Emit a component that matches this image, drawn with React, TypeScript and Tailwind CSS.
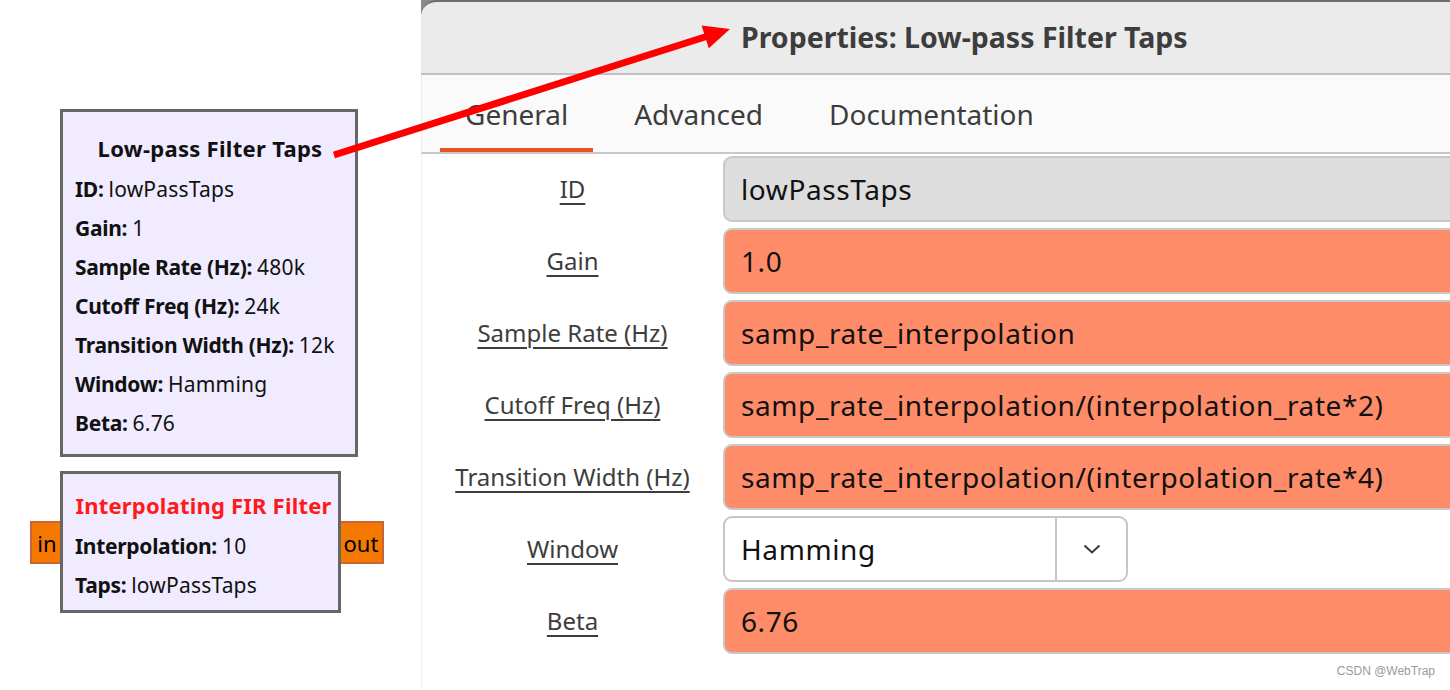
import React from 'react';

const font = { fontFamily: '"Noto Sans", "Open Sans", sans-serif' };

const taps = [
  { k: 'ID:', v: 'lowPassTaps' },
  { k: 'Gain:', v: '1' },
  { k: 'Sample Rate (Hz):', v: '480k' },
  { k: 'Cutoff Freq (Hz):', v: '24k' },
  { k: 'Transition Width (Hz):', v: '12k' },
  { k: 'Window:', v: 'Hamming' },
  { k: 'Beta:', v: '6.76' },
];

const params = [
  { label: 'ID', value: 'lowPassTaps', kind: 'id' },
  { label: 'Gain', value: '1.0', kind: 'expr' },
  { label: 'Sample Rate (Hz)', value: 'samp_rate_interpolation', kind: 'expr' },
  { label: 'Cutoff Freq (Hz)', value: 'samp_rate_interpolation/(interpolation_rate*2)', kind: 'expr' },
  { label: 'Transition Width (Hz)', value: 'samp_rate_interpolation/(interpolation_rate*4)', kind: 'expr' },
  { label: 'Window', value: 'Hamming', kind: 'enum' },
  { label: 'Beta', value: '6.76', kind: 'expr' },
];

function Port({ name, w }: { name: string; w: string }) {
  return (
    <div className={`h-[43px] ${w} flex items-center justify-center bg-[#f57900] border-2 border-[#c8643c] text-[22px] text-black leading-none pt-[2px]`}>
      {name}
    </div>
  );
}

export default function App() {
  return (
    <div className="relative w-[1450px] h-[690px] overflow-hidden bg-white flex" style={font}>
      {/* flowgraph blocks */}
      <div className="w-[421px] shrink-0 flex flex-col pt-[109px]">
        <div className="ml-[60px] w-[298px] h-[348px] border-[3px] border-[#666666] bg-[#f0ebff] pl-[12px] text-[21px] text-[#111] tracking-[0.2px]">
          <div className="h-[72px] flex items-center justify-center pr-[10px] font-bold text-[22px] tracking-[0.3px] whitespace-nowrap">Low-pass Filter Taps</div>
          <div className="flex flex-col -mt-[14px]">
            {taps.map((t) => (
              <div key={t.k} className="h-[39px] flex items-center whitespace-nowrap">
                <span className="font-bold tracking-[-0.3px]">{t.k}</span>
                <span className="ml-[5px]">{t.v}</span>
              </div>
            ))}
          </div>
        </div>

        <div className="mt-[14px] ml-[30px] flex items-center">
          <Port name="in" w="w-[34px]" />
          <div className="relative z-10 -ml-[4px] w-[281px] h-[142px] border-[3px] border-[#666666] bg-[#f0ebff] pl-[12px] text-[21px] text-[#111] tracking-[0.2px]">
            <div className="h-[62px] flex items-center justify-center pr-[6px] font-bold text-[22px] text-[#ff1a1a] whitespace-nowrap">Interpolating FIR Filter</div>
            <div className="h-[39px] -mt-[9px] flex items-center whitespace-nowrap">
              <span className="font-bold tracking-[-0.3px]">Interpolation:</span>
              <span className="ml-[5px]">10</span>
            </div>
            <div className="h-[39px] flex items-center whitespace-nowrap">
              <span className="font-bold tracking-[-0.3px]">Taps:</span>
              <span className="ml-[5px]">lowPassTaps</span>
            </div>
          </div>
          <div className="-ml-[3px]">
            <Port name="out" w="w-[46px]" />
          </div>
        </div>
      </div>

      {/* properties dialog */}
      <div className="flex-1 flex flex-col bg-[linear-gradient(#8a8a8a,#8a8a8a_14px,white_14px)]">
        <div className="h-[75px] shrink-0 rounded-tl-[16px] border-t-2 border-[#6e6e6e] bg-[#ebebeb] border-b-2 border-b-[#c0c0c0] flex items-center pl-[320px]">
          <span className="font-bold text-[28.5px] text-[#3d3d3d] -mt-[1px] whitespace-nowrap">Properties: Low-pass Filter Taps</span>
        </div>
        <div className="h-[79px] shrink-0 bg-[#fafafa] border-l border-[#ececec] border-b-2 border-b-[#c8c8c8] flex items-stretch pl-[18px] gap-[16px]">
          {['General', 'Advanced', 'Documentation'].map((t, i) => (
            <div
              key={t}
              className={`px-[25px] flex items-center pt-[4px] text-[28px] text-[#3d3d3d] border-b-4 ${i === 0 ? 'border-[#e95420]' : 'border-transparent'}`}
            >
              {t}
            </div>
          ))}
        </div>
        <div className="flex-1 bg-white border-l border-[#efefef] pt-[2px] flex flex-col gap-[6px]">
          {params.map((p) => (
            <div key={p.label} className="h-[66px] flex items-center">
              <div className="w-[301px] shrink-0 flex justify-center">
                <span className="text-[24px] text-[#3d3d3d] underline underline-offset-[5px] decoration-[1.5px]">{p.label}</span>
              </div>
              {p.kind === 'enum' ? (
                <div className="h-[66px] w-[405px] rounded-[9px] border-2 border-[#c6c6c6] bg-white flex">
                  <div className="flex-1 flex items-center pl-[16px] text-[28px] tracking-[0.6px] text-[#111]">{p.value}</div>
                  <div className="w-[71px] border-l-2 border-[#c6c6c6] flex items-center justify-center">
                    <svg width="18" height="10" viewBox="0 0 18 10" fill="none">
                      <path d="M1.5 1.5 L9 8.5 L16.5 1.5" stroke="#333" strokeWidth="1.8" />
                    </svg>
                  </div>
                </div>
              ) : (
                <div
                  className={`h-[66px] flex-1 -mr-[24px] rounded-[9px] border-2 border-[#c8c8c8] flex items-center pl-[16px] text-[28px] tracking-[0.6px] text-[#111] whitespace-nowrap ${p.kind === 'id' ? 'bg-[#dddddd]' : 'bg-[#ff8c69]'}`}
                >
                  {p.value}
                </div>
              )}
            </div>
          ))}
        </div>
      </div>

      {/* annotation arrow */}
      <svg className="absolute inset-0 pointer-events-none" width="1450" height="690">
        <line x1="334" y1="155" x2="708" y2="36" stroke="#ff0000" strokeWidth="7" />
        <polygon points="730,29 701.6,25.5 708.8,48.3" fill="#ff0000" />
      </svg>

      <div className="absolute right-[15px] bottom-[10px] text-[12px] text-[#9a9a9a]" style={{ fontFamily: '"Liberation Sans", Arial, sans-serif' }}>
        CSDN @WebTrap
      </div>
    </div>
  );
}
